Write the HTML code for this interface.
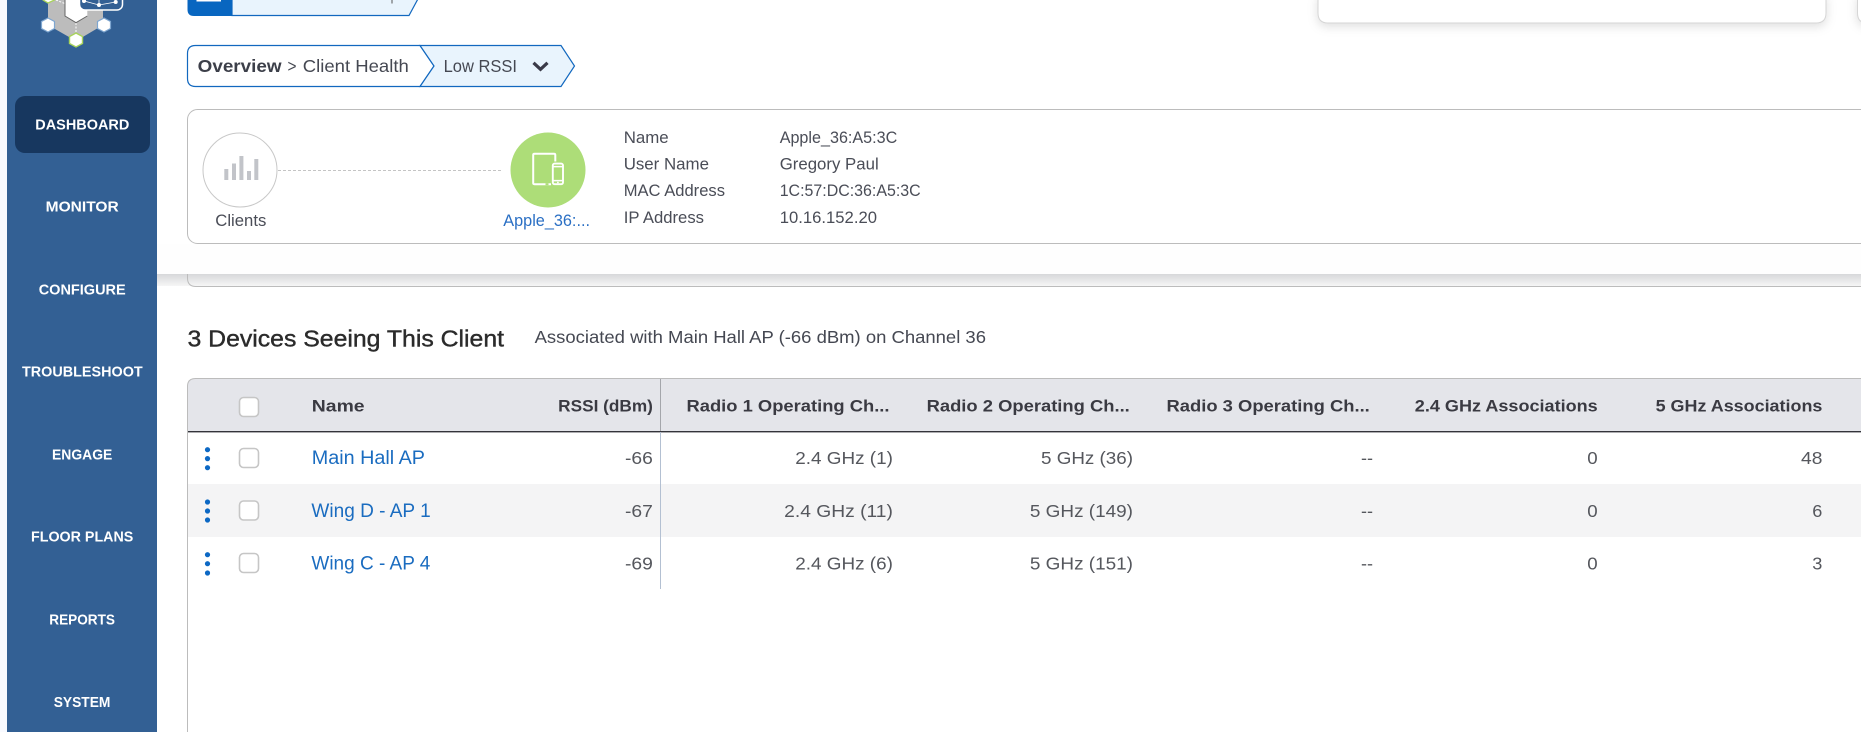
<!DOCTYPE html>
<html lang="en">
<head>
<meta charset="utf-8">
<title>Client Health - Low RSSI</title>
<style>
html,body{margin:0;padding:0;width:1861px;height:732px;overflow:hidden;background:#fff}
svg{display:block}
text{font-family:"Liberation Sans",sans-serif}
.nav{font-size:15px;font-weight:700;fill:#fff}
.b{font-size:17.5px;fill:#454852}
.info{font-size:17px;fill:#4a4d57}
.th{font-size:17px;font-weight:700;fill:#3a3a42}
.td{font-size:17.5px;fill:#55575d}
.lnk{font-size:19px;fill:#1a6cc0}
</style>
</head>
<body>
<svg xmlns="http://www.w3.org/2000/svg" width="1861" height="732" viewBox="0 0 1861 732">
<defs>
<linearGradient id="sh" x1="0" y1="0" x2="0" y2="1"><stop offset="0" stop-color="#d7d8da"/><stop offset="1" stop-color="#f6f6f6"/></linearGradient>
</defs>
<rect width="1861" height="732" fill="#fff"/>
<rect x="0" y="0" width="7" height="732" fill="#f8faff"/>

<!-- sidebar -->
<rect x="7" y="0" width="150" height="732" fill="#336094"/>
<!-- logo -->
<polygon points="48,0 48,25 76,41 103,25 103,0" fill="#bcbcbc"/>
<path d="M76 23V34M56 0L66 4" stroke="#fff" stroke-width="1" stroke-dasharray="2 1.5" fill="none"/>
<polygon points="65,0 65,16 76,22.7 87.3,16 87.3,0" fill="#fff"/>
<path d="M65 0V16L76 22.7L87.3 16" fill="none" stroke="#666" stroke-width="1"/>
<polygon points="48,18 54.5,21.5 54.5,28.5 48,32 41.5,28.5 41.5,21.5" fill="#fff" stroke="#7ea6d0" stroke-width="1.2"/>
<polygon points="104,18 110.5,21.5 110.5,28.5 104,32 97.5,28.5 97.5,21.5" fill="#fff" stroke="#7ea6d0" stroke-width="1.2"/>
<polygon points="76,33 82.5,36.5 82.5,43.5 76,47 69.5,43.5 69.5,36.5" fill="#fff" stroke="#a8d45a" stroke-width="1.4"/>
<polygon points="48,-5 54.5,-2 54.5,0 48,3 43,0 43,-2" fill="#fff" stroke="#a8d45a" stroke-width="1.3"/>
<rect x="79.5" y="-10" width="43" height="20" rx="5.5" fill="#336094" stroke="#fff" stroke-width="1.5"/>
<path d="M84 1L99 5L115.7 2M84 1L90 -3M99 5V-2" stroke="#fff" stroke-width=".8" fill="none"/>
<circle cx="84" cy="1" r="2" fill="#fff"/><circle cx="99" cy="5" r="2" fill="#fff"/><circle cx="115.7" cy="2" r="2" fill="#fff"/>

<rect x="15" y="96" width="135" height="57" rx="10" fill="#17375f"/>
<text class="nav" x="35.3" y="129.4" textLength="94" lengthAdjust="spacingAndGlyphs">DASHBOARD</text>
<text class="nav" x="45.7" y="211.5" textLength="73" lengthAdjust="spacingAndGlyphs">MONITOR</text>
<text class="nav" x="38.7" y="294.5" textLength="87" lengthAdjust="spacingAndGlyphs">CONFIGURE</text>
<text class="nav" x="22" y="376.5" textLength="120.7" lengthAdjust="spacingAndGlyphs">TROUBLESHOOT</text>
<text class="nav" x="52" y="459.5" textLength="60.3" lengthAdjust="spacingAndGlyphs">ENGAGE</text>
<text class="nav" x="31" y="541.5" textLength="102.3" lengthAdjust="spacingAndGlyphs">FLOOR PLANS</text>
<text class="nav" x="49.3" y="624.5" textLength="65.7" lengthAdjust="spacingAndGlyphs">REPORTS</text>
<text class="nav" x="53.7" y="706.8" textLength="56.7" lengthAdjust="spacingAndGlyphs">SYSTEM</text>

<!-- top breadcrumb fragment -->
<path d="M232 -3H419L409 15.5H232Z" fill="#e9f4fd" stroke="#1268bf" stroke-width="1.2"/>
<path d="M187.5 -3H232V16H194Q187.5 16 187.5 9.5Z" fill="#0866c0"/>
<rect x="196.5" y="-4" width="24.5" height="5.5" fill="#fff"/>
<rect x="391.5" y="0" width="1" height="3.5" fill="#555"/>

<!-- top-right cards -->
<g style="filter:drop-shadow(0 3px 5px rgba(0,0,0,.13))">
<path d="M1318 -5V13Q1318 23 1328 23H1816Q1826 23 1826 13V-5Z" fill="#fff" stroke="#d6d6d6"/>
<path d="M1857.5 -5V13Q1857.5 23 1867 23H1880V-5Z" fill="#fff" stroke="#d6d6d6"/>
</g>

<!-- breadcrumb -->
<path d="M420 45.5H195.5Q187.5 45.5 187.5 53.5V78.5Q187.5 86.5 195.5 86.5H420L434 66Z" fill="#fff" stroke="#1268bf" stroke-width="1.2"/>
<path d="M420 45.5H561L574.5 66L561 86.5H420L434 66Z" fill="#e9f4fd" stroke="#1268bf" stroke-width="1.2"/>
<text class="b" x="197.7" y="71.8" textLength="83.8" lengthAdjust="spacingAndGlyphs" style="font-weight:700;fill:#3c3f49">Overview</text>
<text class="b" x="287.5" y="71.8" textLength="9" lengthAdjust="spacingAndGlyphs">&gt;</text>
<text class="b" x="302.8" y="71.8" textLength="106" lengthAdjust="spacingAndGlyphs">Client Health</text>
<text class="b" x="443.6" y="71.8" textLength="73.4" lengthAdjust="spacingAndGlyphs">Low RSSI</text>
<path d="M533.5 62.8L540.5 69.3L547.5 62.8" fill="none" stroke="#3a3a48" stroke-width="3.2"/>

<!-- overview panel -->
<rect x="157" y="244" width="1704" height="30" fill="#fefefe"/>
<rect x="187.5" y="109.5" width="1700" height="134" rx="10" fill="#fff" stroke="#bcbcbc" stroke-width="1"/>
<circle cx="240" cy="170" r="37" fill="#fff" stroke="#c8c8c8"/>
<g fill="#c2c4c9">
<rect x="224.3" y="169" width="4" height="11"/>
<rect x="232" y="163.5" width="4" height="16.5"/>
<rect x="239.4" y="156" width="4" height="24"/>
<rect x="247" y="171" width="4" height="9"/>
<rect x="254.3" y="159" width="4" height="21"/>
</g>
<path d="M278 170.5H503" stroke="#c4c4c4" stroke-width="1" stroke-dasharray="3 2" fill="none"/>
<circle cx="548" cy="170" r="37.5" fill="#addd78"/>
<path d="M551 184.2H534.5Q533.2 184.2 533.2 183V155Q533.2 153.8 534.5 153.8H554Q555.3 153.8 555.3 155V161.5" fill="none" stroke="#fff" stroke-width="2"/>
<path d="M545.5 184.2H548.5" stroke="#addd78" stroke-width="2"/>
<rect x="552.8" y="163.6" width="10.2" height="20.6" rx="1.8" fill="none" stroke="#fff" stroke-width="1.9"/>
<path d="M552.8 166.6H563M552.8 180.6H563" stroke="#fff" stroke-width="1.5"/>
<circle cx="557.9" cy="182.5" r=".9" fill="#fff"/>
<text class="info" x="215.3" y="226" textLength="51" lengthAdjust="spacingAndGlyphs">Clients</text>
<text class="info" x="503.3" y="226" textLength="86.7" lengthAdjust="spacingAndGlyphs" style="fill:#2a6fc4">Apple_36:...</text>

<text class="info" x="623.7" y="143" textLength="45" lengthAdjust="spacingAndGlyphs">Name</text>
<text class="info" x="623.7" y="169.7" textLength="85.3" lengthAdjust="spacingAndGlyphs">User Name</text>
<text class="info" x="623.7" y="196.2" textLength="101.3" lengthAdjust="spacingAndGlyphs">MAC Address</text>
<text class="info" x="623.7" y="222.8" textLength="80.3" lengthAdjust="spacingAndGlyphs">IP Address</text>
<text class="info" x="779.7" y="143" textLength="117.6" lengthAdjust="spacingAndGlyphs">Apple_36:A5:3C</text>
<text class="info" x="779.7" y="169.7" textLength="99" lengthAdjust="spacingAndGlyphs">Gregory Paul</text>
<text class="info" x="779.7" y="196.2" textLength="141" lengthAdjust="spacingAndGlyphs">1C:57:DC:36:A5:3C</text>
<text class="info" x="779.7" y="222.8" textLength="97.3" lengthAdjust="spacingAndGlyphs">10.16.152.20</text>

<!-- shadow + lower edge of hidden card -->
<rect x="157" y="274" width="1704" height="12" fill="url(#sh)"/>
<path d="M187.5 274V278Q187.5 286.5 196 286.5H1861" fill="none" stroke="#bcbcbc" stroke-width="1"/>

<!-- heading -->
<text x="187.5" y="346.7" textLength="316.5" lengthAdjust="spacingAndGlyphs" style="font-size:23px;fill:#2b2b2b;stroke:#2b2b2b;stroke-width:.4">3 Devices Seeing This Client</text>
<text class="b" x="534.6" y="343" textLength="451.4" lengthAdjust="spacingAndGlyphs">Associated with Main Hall AP (-66 dBm) on Channel 36</text>

<!-- table -->
<path d="M187.5 431V386.5Q187.5 378.5 195.5 378.5H1861V431Z" fill="#e4e5ea"/>
<path d="M187.5 732V386.5Q187.5 378.5 195.5 378.5H1861" fill="none" stroke="#bcbcbc" stroke-width="1"/>
<rect x="188" y="484" width="1673" height="53" fill="#f4f4f5"/>
<rect x="188" y="431" width="1673" height="1.4" fill="#33343a"/>
<rect x="660" y="379" width="1" height="52" fill="#a4a6ab"/>
<rect x="660" y="432" width="1" height="157" fill="#b3c0d2"/>

<rect x="239.5" y="397.5" width="19" height="19" rx="4" fill="#fff" stroke="#c6c6c6" stroke-width="1.6"/>
<rect x="239.5" y="448.5" width="19" height="19" rx="4" fill="#fff" stroke="#c6c6c6" stroke-width="1.6"/>
<rect x="239.5" y="501" width="19" height="19" rx="4" fill="#fff" stroke="#c6c6c6" stroke-width="1.6"/>
<rect x="239.5" y="553.5" width="19" height="19" rx="4" fill="#fff" stroke="#c6c6c6" stroke-width="1.6"/>

<g fill="#0c68c4">
<circle cx="207.5" cy="449.7" r="2.6"/><circle cx="207.5" cy="458.6" r="2.6"/><circle cx="207.5" cy="467.7" r="2.6"/>
<circle cx="207.5" cy="502" r="2.6"/><circle cx="207.5" cy="511" r="2.6"/><circle cx="207.5" cy="520" r="2.6"/>
<circle cx="207.5" cy="554.7" r="2.6"/><circle cx="207.5" cy="563.7" r="2.6"/><circle cx="207.5" cy="573" r="2.6"/>
</g>

<text class="th" x="311.8" y="411.4" textLength="52.8" lengthAdjust="spacingAndGlyphs">Name</text>
<text class="th" x="558.2" y="411.4" textLength="94.7" lengthAdjust="spacingAndGlyphs">RSSI (dBm)</text>
<text class="th" x="686.5" y="411.4" textLength="203" lengthAdjust="spacingAndGlyphs">Radio 1 Operating Ch...</text>
<text class="th" x="926.6" y="411.4" textLength="203.2" lengthAdjust="spacingAndGlyphs">Radio 2 Operating Ch...</text>
<text class="th" x="1166.5" y="411.4" textLength="203.3" lengthAdjust="spacingAndGlyphs">Radio 3 Operating Ch...</text>
<text class="th" x="1414.8" y="411.4" textLength="182.9" lengthAdjust="spacingAndGlyphs">2.4 GHz Associations</text>
<text class="th" x="1655.6" y="411.4" textLength="166.8" lengthAdjust="spacingAndGlyphs">5 GHz Associations</text>

<text class="lnk" x="311.8" y="464.2" textLength="113.2" lengthAdjust="spacingAndGlyphs">Main Hall AP</text>
<text class="lnk" x="311.4" y="517.2" textLength="119.3" lengthAdjust="spacingAndGlyphs">Wing D - AP 1</text>
<text class="lnk" x="311.4" y="569.7" textLength="119" lengthAdjust="spacingAndGlyphs">Wing C - AP 4</text>

<text class="td" x="625" y="464.2" textLength="27.9" lengthAdjust="spacingAndGlyphs">-66</text>
<text class="td" x="625" y="517.2" textLength="27.9" lengthAdjust="spacingAndGlyphs">-67</text>
<text class="td" x="625" y="569.7" textLength="27.9" lengthAdjust="spacingAndGlyphs">-69</text>
<text class="td" x="795.3" y="464.2" textLength="97.6" lengthAdjust="spacingAndGlyphs">2.4 GHz (1)</text>
<text class="td" x="784.2" y="517.2" textLength="108.7" lengthAdjust="spacingAndGlyphs">2.4 GHz (11)</text>
<text class="td" x="795.3" y="569.7" textLength="97.6" lengthAdjust="spacingAndGlyphs">2.4 GHz (6)</text>
<text class="td" x="1041" y="464.2" textLength="92" lengthAdjust="spacingAndGlyphs">5 GHz (36)</text>
<text class="td" x="1029.9" y="517.2" textLength="103.1" lengthAdjust="spacingAndGlyphs">5 GHz (149)</text>
<text class="td" x="1029.9" y="569.7" textLength="103.1" lengthAdjust="spacingAndGlyphs">5 GHz (151)</text>
<text class="td" x="1361" y="464.2" textLength="12" lengthAdjust="spacingAndGlyphs">--</text>
<text class="td" x="1361" y="517.2" textLength="12" lengthAdjust="spacingAndGlyphs">--</text>
<text class="td" x="1361" y="569.7" textLength="12" lengthAdjust="spacingAndGlyphs">--</text>
<text class="td" x="1587.3" y="464.2" textLength="10.4" lengthAdjust="spacingAndGlyphs">0</text>
<text class="td" x="1587.3" y="517.2" textLength="10.4" lengthAdjust="spacingAndGlyphs">0</text>
<text class="td" x="1587.3" y="569.7" textLength="10.4" lengthAdjust="spacingAndGlyphs">0</text>
<text class="td" x="1801" y="464.2" textLength="21.4" lengthAdjust="spacingAndGlyphs">48</text>
<text class="td" x="1812.3" y="517.2" textLength="10.1" lengthAdjust="spacingAndGlyphs">6</text>
<text class="td" x="1812.3" y="569.7" textLength="10.1" lengthAdjust="spacingAndGlyphs">3</text>
</svg>
</body>
</html>
